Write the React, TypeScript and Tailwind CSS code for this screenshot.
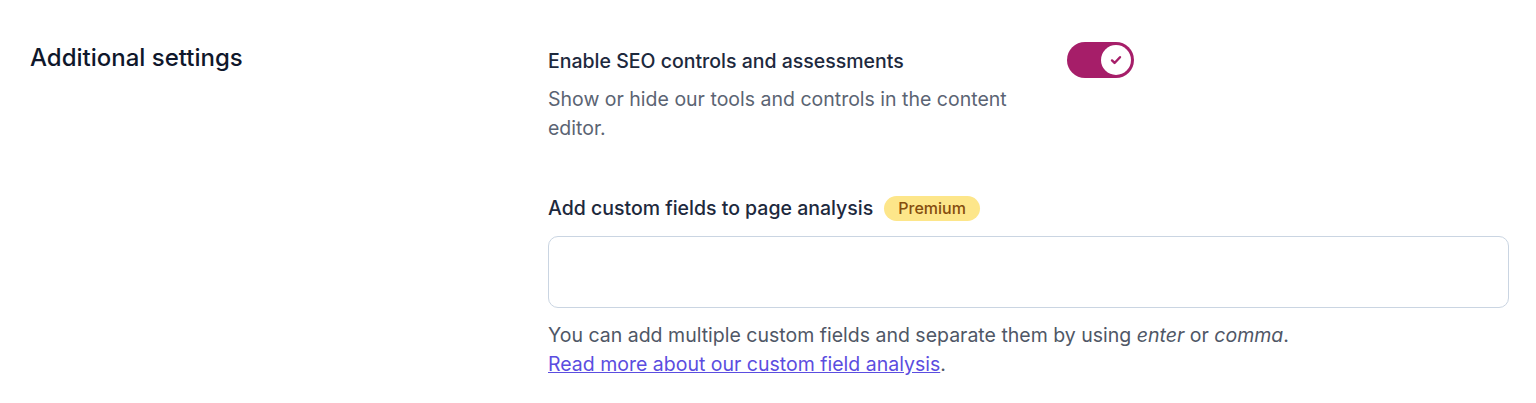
import { useState } from "react";

function Toggle() {
  const [on, setOn] = useState(true);
  return (
    <button
      type="button"
      onClick={() => setOn(!on)}
      className={`flex items-center w-[67px] h-[36px] rounded-full p-[3px] ${on ? "bg-[#a61e69] justify-end" : "bg-slate-200 justify-start"}`}
    >
      <span className="flex items-center justify-center w-[30px] h-[30px] rounded-full bg-white">
        {on && (
          <svg width="16" height="16" viewBox="0 0 20 20" fill="none">
            <path d="M5 10.5l3.2 3.2 6.8-7.2" stroke="#a61e69" strokeWidth="3" strokeLinecap="round" strokeLinejoin="round" />
          </svg>
        )}
      </span>
    </button>
  );
}

export default function App() {
  return (
    <div className="min-h-[403px] bg-white font-['Inter','Noto_Sans',sans-serif] antialiased">
      <div className="grid grid-cols-[518px_1fr] pl-[30px] pr-[27px] pt-[42px] pb-[20px]">
        <h2 className="text-[24px] leading-[32px] font-medium text-slate-900">Additional settings</h2>

        <div className="flex flex-col">
          <div className="grid grid-cols-[519px_auto] items-start">
            <div className="pt-[6px]">
              <div className="text-[19.5px] leading-[26px] font-medium text-slate-800">Enable SEO controls and assessments</div>
              <p className="mt-[11px] w-[490px] text-[19.5px] leading-[29px] text-[#5b6473]">
                Show or hide our tools and controls in the content editor.
              </p>
            </div>
            <Toggle />
          </div>

          <div className="mt-[52px] flex items-center gap-[11px]">
            <label className="text-[19.5px] leading-[26px] font-medium text-slate-800">Add custom fields to page analysis</label>
            <span className="rounded-full bg-[#fde68a] px-[14px] h-[25px] flex items-center text-[16px] font-medium text-[#854d0e]">Premium</span>
          </div>

          <input
            type="text"
            className="mt-[15px] h-[72px] w-full rounded-[10px] border border-slate-300 bg-white px-4 outline-none"
          />

          <p className="mt-[13px] text-[19.5px] leading-[29px] text-[#4f5766]">
            You can add multiple custom fields and separate them by using <em>enter</em> or <em>comma</em>.
            <br />
            <a href="#" className="text-[#5b4de0] underline">Read more about our custom field analysis</a>.
          </p>
        </div>
      </div>
    </div>
  );
}
